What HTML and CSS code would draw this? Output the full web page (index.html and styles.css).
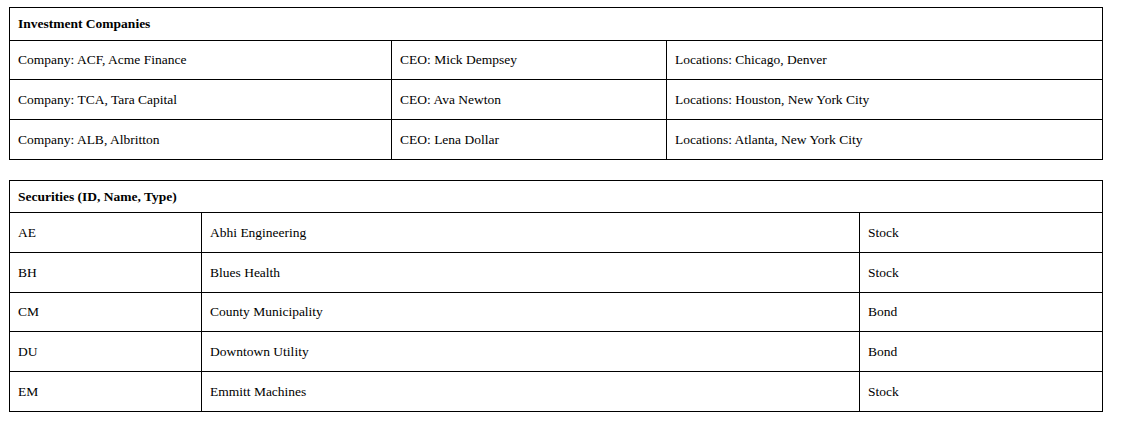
FILE: index.html
```html
<!DOCTYPE html>
<html>
<head>
<meta charset="utf-8">
<link rel="stylesheet" href="styles.css">
</head>
<body>
<div class="page">
  <table class="grid companies">
    <colgroup><col class="c1"><col class="c2"><col class="c3"></colgroup>
    <tr><th colspan="3">Investment Companies</th></tr>
    <tr><td>Company: ACF, Acme Finance</td><td>CEO: Mick Dempsey</td><td>Locations: Chicago, Denver</td></tr>
    <tr><td>Company: TCA, Tara Capital</td><td>CEO: Ava Newton</td><td>Locations: Houston, New York City</td></tr>
    <tr><td>Company: ALB, Albritton</td><td>CEO: Lena Dollar</td><td>Locations: Atlanta, New York City</td></tr>
  </table>
  <table class="grid securities">
    <colgroup><col class="s1"><col class="s2"><col class="s3"></colgroup>
    <tr><th colspan="3">Securities (ID, Name, Type)</th></tr>
    <tr><td>AE</td><td>Abhi Engineering</td><td>Stock</td></tr>
    <tr><td>BH</td><td>Blues Health</td><td>Stock</td></tr>
    <tr><td>CM</td><td>County Municipality</td><td>Bond</td></tr>
    <tr><td>DU</td><td>Downtown Utility</td><td>Bond</td></tr>
    <tr><td>EM</td><td>Emmitt Machines</td><td>Stock</td></tr>
  </table>
</div>
</body>
</html>
```
FILE: styles.css
```css
html, body {
  margin: 0;
  padding: 0;
  background: #fff;
}
.page {
  padding: 7px 0 0 9px;
  display: flex;
  flex-direction: column;
  gap: 20px;
  font-family: "Liberation Serif", "Times New Roman", serif;
  font-size: 13.5px;
  color: #000;
}
.grid {
  border-collapse: collapse;
  width: 1093px;
  table-layout: fixed;
}
.grid th, .grid td {
  border: 1px solid #000;
  text-align: left;
  padding: 0 8px;
  line-height: 15px;
}
.grid th {
  font-weight: bold;
  height: 31.6px;
}
.grid td {
  height: 38.7px;
}
.companies .c1 { width: 382px; }
.companies .c2 { width: 275px; }
.companies .c3 { width: 436px; }
.securities .s1 { width: 192px; }
.securities .s2 { width: 658px; }
.securities .s3 { width: 243px; }
```
